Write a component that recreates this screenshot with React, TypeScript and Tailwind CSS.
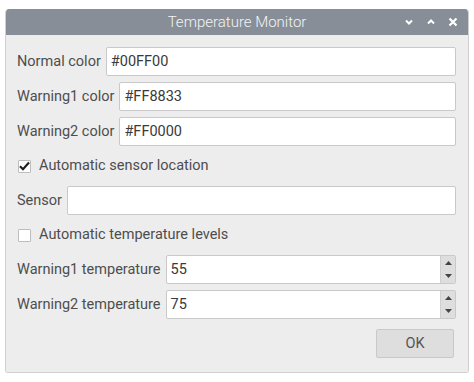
import { useState } from 'react'

const font = { fontFamily: 'Roboto, "Liberation Sans", sans-serif' }

function TextRow({ label, value }: { label: string; value: string }) {
  return (
    <div className="flex items-center h-[29px]">
      <span className="text-[14.5px] text-[#4d4d4d] pr-[5px] whitespace-nowrap">{label}</span>
      <div className="flex-1 h-full bg-white border border-[#c9c9c9] rounded-[2px] flex items-center px-[4px] text-[14.5px] text-[#3a3a3a]">
        {value}
      </div>
    </div>
  )
}

function SpinRow({ label, value }: { label: string; value: string }) {
  return (
    <div className="flex items-center h-[29px]">
      <span className="text-[14.5px] text-[#4d4d4d] pr-[5px] whitespace-nowrap">{label}</span>
      <div className="flex-1 h-full bg-white border border-[#c9c9c9] rounded-[2px] flex">
        <div className="flex-1 flex items-center px-[4px] text-[14.5px] text-[#3a3a3a]">{value}</div>
        <div className="w-[15px] flex flex-col bg-[#dedede] border-l border-[#cfcfcf]">
          <div className="flex-1 flex items-center justify-center">
            <svg width="7" height="4" viewBox="0 0 7 4"><path d="M0 4 L3.5 0 L7 4 Z" fill="#444" /></svg>
          </div>
          <div className="flex-1 flex items-center justify-center">
            <svg width="7" height="4" viewBox="0 0 7 4"><path d="M0 0 L3.5 4 L7 0 Z" fill="#444" /></svg>
          </div>
        </div>
      </div>
    </div>
  )
}

function CheckRow({ label, checked }: { label: string; checked: boolean }) {
  return (
    <div className="flex items-center h-[28px] pl-[1px]">
      <div className="w-[13px] h-[13px] bg-white border border-[#bdbdbd] rounded-[1px] flex items-center justify-center">
        {checked && (
          <svg width="11" height="10" viewBox="0 0 11 10">
            <path d="M1 5.2 L4 8.2 L10 1.5" stroke="#222" strokeWidth="2.2" fill="none" />
          </svg>
        )}
      </div>
      <span className="ml-[8px] text-[14.5px] text-[#4d4d4d]">{label}</span>
    </div>
  )
}

export default function App() {
  const [auto] = useState(true)

  return (
    <div className="w-[474px] h-[382px] bg-white pt-[9px] pl-[5px]" style={font}>
      <div className="w-[464px] rounded-t-[4px] rounded-b-[3px] overflow-hidden border border-[#d0d0d0] border-t-0">
        {/* Title bar */}
        <div className="relative h-[26px] bg-[#878e97] flex items-center justify-center">
          <span className="text-[15px] text-[#f3f4f5] font-light">Temperature Monitor</span>
          <div className="absolute right-[10px] top-0 h-full flex items-center gap-[12px]">
            <svg width="10" height="10" viewBox="0 0 10 10">
              <path d="M2 3.5 L5 6.5 L8 3.5" stroke="#fff" strokeWidth="2" fill="none" />
            </svg>
            <svg width="10" height="10" viewBox="0 0 10 10">
              <path d="M2 6.5 L5 3.5 L8 6.5" stroke="#fff" strokeWidth="2" fill="none" />
            </svg>
            <svg width="10" height="10" viewBox="0 0 10 10">
              <path d="M1.5 1.5 L8.5 8.5 M8.5 1.5 L1.5 8.5" stroke="#fff" strokeWidth="2.2" />
            </svg>
          </div>
        </div>

        {/* Body */}
        <div className="bg-[#ededed] pt-[12px] pl-[11px] pr-[12px] pb-[14px] flex flex-col gap-[6px]">
          <TextRow label="Normal color" value="#00FF00" />
          <TextRow label="Warning1 color" value="#FF8833" />
          <TextRow label="Warning2 color" value="#FF0000" />
          <CheckRow label="Automatic sensor location" checked={auto} />
          <TextRow label="Sensor" value="" />
          <CheckRow label="Automatic temperature levels" checked={false} />
          <SpinRow label="Warning1 temperature" value="55" />
          <SpinRow label="Warning2 temperature" value="75" />
          <div className="flex justify-end mt-[4px] pr-[2px]">
            <button className="w-[78px] h-[29px] bg-[#dedede] border border-[#c9c9c9] rounded-[2px] text-[14.5px] text-[#555]">
              OK
            </button>
          </div>
        </div>
      </div>
    </div>
  )
}
